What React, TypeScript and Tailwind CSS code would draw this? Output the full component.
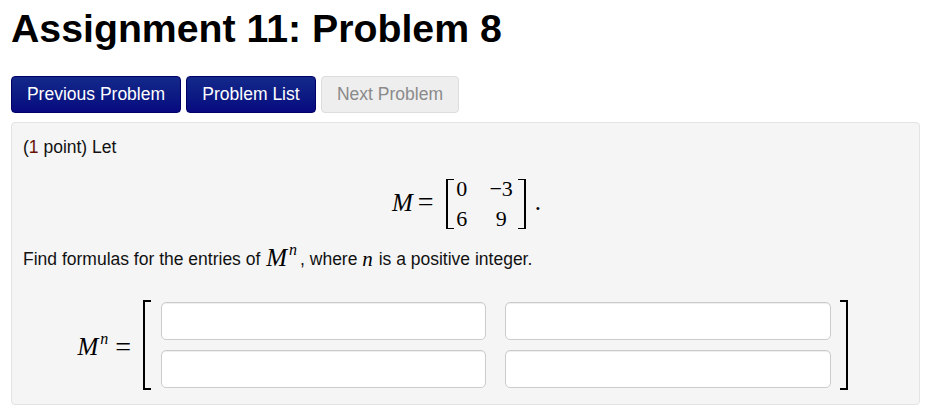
const serif = "font-['Liberation_Serif',serif]";

function AnswerBox() {
  return (
    <input
      type="text"
      className="h-[38px] w-full rounded-[5px] border border-[#cccccc] bg-white shadow-[inset_0_1px_1px_rgba(0,0,0,0.075)]"
    />
  );
}

function MPower() {
  return (
    <span className={`${serif} italic text-[25px] leading-none text-black`}>
      M<sup className="ml-[2px] text-[16px] leading-none align-[3px]">n</sup>
    </span>
  );
}

export default function App() {
  return (
    <div className="h-[416px] w-[928px] overflow-hidden bg-white px-[11px] font-['Liberation_Sans',sans-serif] text-[17.5px] text-[#111111]">
      <h1 className="pt-[5px] text-[39.25px] font-bold leading-[46px] text-black">Assignment 11: Problem 8</h1>

      <div className="mt-[25px] flex gap-[5px] text-[17.5px] leading-[20px]">
        <button className="h-[37px] w-[170px] rounded-[4px] border border-[#000066] bg-gradient-to-b from-[#14288a] to-[#08087f] pb-[2px] text-white">
          Previous Problem
        </button>
        <button className="h-[37px] w-[130px] rounded-[4px] border border-[#000066] bg-gradient-to-b from-[#14288a] to-[#08087f] pb-[2px] text-white">
          Problem List
        </button>
        <button className="h-[37px] w-[138px] rounded-[4px] border border-[#dddddd] bg-[#eeeeee] pb-[2px] text-[#8a8a8a]">
          Next Problem
        </button>
      </div>

      <div className="mt-[9px] h-[283px] w-[909px] rounded-[4px] border border-[#e3e3e3] bg-[#f5f5f5] pl-[11px] pt-[13px]">
        <p className="leading-[22px]">
          (<span className="text-[#661100]">1</span> point) Let
        </p>

        <div className="mt-[16px] flex h-[60px] items-center pl-[369px]">
          <span className={`${serif} pb-[4px] italic text-[25px] leading-none text-black`}>M</span>
          <span className={`${serif} ml-[5px] pb-[4px] text-[28px] leading-none text-black`}>=</span>
          <div className="ml-[12px] h-[50px] w-[8px] border-y border-l-2 border-black" />
          <div className={`${serif} grid w-[64px] grid-cols-[16px_48px] text-center text-[22px] leading-[30px] text-black`}>
            <span>0</span>
            <span className="pl-[15px]">−3</span>
            <span>6</span>
            <span className="pl-[15px]">9</span>
          </div>
          <div className="h-[50px] w-[8px] border-y border-r-2 border-black" />
          <span className={`${serif} ml-[9px] pb-[6px] text-[25px] leading-none text-black`}>.</span>
        </div>

        <p className="mt-[11px] flex h-[28px] items-center whitespace-pre">
          Find formulas for the entries of{' '}
          <span className="ml-[1px]">
            <MPower />
          </span>
          <span className="ml-[3px]">, where </span>
          <span className={`${serif} italic text-[21px] leading-none text-black`}>n</span>
          <span className="ml-[1px]"> is a positive integer.</span>
        </p>

        <div className="mt-[27px] flex items-center">
          <div className="flex w-[120px] justify-end pr-[12px] pt-[3px]">
            <span className="flex items-center gap-[7px]">
              <MPower />
              <span className={`${serif} text-[28px] leading-none text-black`}>=</span>
            </span>
          </div>
          <div className="h-[90px] w-[8px] border-y-2 border-l-2 border-black" />
          <div className="ml-[10px] grid grid-cols-[325px_326px] gap-x-[19px] gap-y-[10px]">
            <AnswerBox />
            <AnswerBox />
            <AnswerBox />
            <AnswerBox />
          </div>
          <div className="ml-[9px] h-[90px] w-[8px] border-y-2 border-r-2 border-black" />
        </div>
      </div>
    </div>
  );
}
